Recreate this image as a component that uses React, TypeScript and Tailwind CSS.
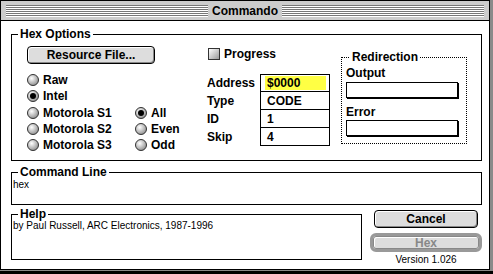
import React from 'react';

const Radio = ({ on }: { on?: boolean }) => (
  <svg width="12" height="12" viewBox="0 0 12 12" className="shrink-0">
    <defs>
      <radialGradient id="radioFill" cx="38%" cy="35%" r="70%">
        <stop offset="0" stopColor="#ffffff" />
        <stop offset="1" stopColor="#8c8c8c" />
      </radialGradient>
    </defs>
    <circle cx="6" cy="6" r="5.5" fill="url(#radioFill)" stroke="#333333" strokeWidth="1" />
    {on && <circle cx="6" cy="6" r="3" fill="#000000" />}
  </svg>
);

const RadioItem = ({ label, on }: { label: string; on?: boolean }) => (
  <div className="h-[16.25px] flex items-center gap-[4px] font-bold text-[12px] leading-[14px]">
    <Radio on={on} />
    <span>{label}</span>
  </div>
);

const Group = ({
  title,
  className,
  tight,
  children,
}: {
  title: string;
  className?: string;
  tight?: boolean;
  children?: React.ReactNode;
}) => (
  <fieldset className={`border border-black min-w-0 ${className ?? ''}`}>
    <legend
      className={`ml-[6px] px-[2px] font-bold text-[12px] ${tight ? 'leading-[10px]' : 'leading-[14px]'}`}
    >
      {title}
    </legend>
    {children}
  </fieldset>
);

const EditField = () => (
  <div className="w-[112px] h-[16px] border border-black bg-white shadow-[1px_1px_0_#000]" />
);

export default function App() {
  return (
    <div className="w-[493px] h-[274px] bg-black overflow-hidden font-['Liberation_Sans',Arial,sans-serif] text-black">
      <div className="w-[493px] h-[271px] bg-[#8a8a8a]">
        <div className="w-[490px] h-[270px] border border-black bg-white flex flex-col">
          {/* title bar */}
          <div className="h-[20px] shrink-0 bg-[#cccccc] border-b border-black flex items-center px-[5px]">
            <div className="flex-1 h-[12px] bg-[repeating-linear-gradient(to_bottom,#777777_0px,#777777_1px,#ffffff_1px,#ffffff_2px)]" />
            <div className="px-[4px] font-bold text-[12px] leading-[14px]">Commando</div>
            <div className="flex-1 h-[12px] bg-[repeating-linear-gradient(to_bottom,#777777_0px,#777777_1px,#ffffff_1px,#ffffff_2px)]" />
          </div>

          <div className="flex flex-col pl-[10px] pr-[7px] pt-[6px]">
            {/* Hex Options */}
            <Group title="Hex Options">
              <div className="flex">
                <div className="w-[195px] pl-[15px] pt-[5px] pb-[7px]">
                  <div className="w-[128px] h-[18px] rounded-[4px] border border-black bg-[#dddddd] shadow-[inset_1px_1px_0_#ffffff,inset_-1px_-1px_0_#888888] flex items-center justify-center font-bold text-[12px] leading-[14px]">
                    Resource File...
                  </div>
                  <div className="mt-[8px] grid grid-cols-[108px_1fr]">
                    <RadioItem label="Raw" />
                    <div />
                    <RadioItem label="Intel" on />
                    <div />
                    <RadioItem label="Motorola S1" />
                    <RadioItem label="All" on />
                    <RadioItem label="Motorola S2" />
                    <RadioItem label="Even" />
                    <RadioItem label="Motorola S3" />
                    <RadioItem label="Odd" />
                  </div>
                </div>

                <div className="w-[123px] pt-[5px]">
                  <div className="h-[16px] flex items-center gap-[4px] font-bold text-[12px] leading-[14px]">
                    <div className="ml-[1px] w-[12px] h-[12px] border border-[#333333] bg-[linear-gradient(135deg,#ffffff,#999999)]" />
                    <span>Progress</span>
                  </div>
                  <div className="mt-[12px] grid grid-cols-[53px_70px] font-bold text-[12px] leading-[14px]">
                    <div className="h-[18px] flex items-center">Address</div>
                    <div className="h-[18px] border border-black pl-[4px] pr-[3px] py-[1px]">
                      <div className="h-full bg-[#ffff44] pl-[2px] flex items-center">$0000</div>
                    </div>
                    <div className="h-[18px] flex items-center">Type</div>
                    <div className="h-[18px] border-x border-b border-black pl-[6px] flex items-center">CODE</div>
                    <div className="h-[18px] flex items-center">ID</div>
                    <div className="h-[18px] border-x border-b border-black pl-[6px] flex items-center">1</div>
                    <div className="h-[18px] flex items-center">Skip</div>
                    <div className="h-[18px] border-x border-b border-black pl-[6px] flex items-center">4</div>
                  </div>
                </div>

                <div className="ml-[11px] w-[126px] pt-[9px]">
                  <fieldset className="border border-dotted border-black pl-[4px] pb-[7px] min-w-0">
                    <legend className="ml-[4px] px-[2px] font-bold text-[12px] leading-[14px]">Redirection</legend>
                    <div className="mt-[2px] font-bold text-[12px] leading-[14px]">Output</div>
                    <div className="mt-[2px]">
                      <EditField />
                    </div>
                    <div className="mt-[7px] font-bold text-[12px] leading-[14px]">Error</div>
                    <div className="mt-[1px]">
                      <EditField />
                    </div>
                  </fieldset>
                </div>
              </div>
            </Group>

            {/* Command Line */}
            <Group title="Command Line" className="mt-[4px] h-[40px]">
              <div className="pl-[1px] text-[10px] leading-[12px]">hex</div>
            </Group>

            {/* Help + buttons */}
            <div className="mt-[2px] flex gap-[8px]">
              <Group title="Help" tight className="mt-[2px] w-[351px] h-[51px]">
                <div className="pt-[2px] pl-[1px] text-[10px] leading-[10px]">
                  by Paul Russell, ARC Electronics, 1987-1996
                </div>
              </Group>
              <div className="w-[112px] flex flex-col">
                <div className="mt-[3px] mx-[4px] h-[18px] rounded-[4px] border border-black bg-[#dddddd] shadow-[inset_1px_1px_0_#ffffff,inset_-1px_-1px_0_#888888] flex items-center justify-center font-bold text-[12px] leading-[14px]">
                  Cancel
                </div>
                <div className="mt-[5px] h-[19px] rounded-[6px] border-[3px] border-[#999999] bg-[#dddddd] flex">
                  <div className="flex-1 rounded-[3px] border border-[#888888] shadow-[inset_1px_1px_0_#ffffff] flex items-center justify-center font-bold text-[12px] leading-[12px] text-[#888888]">
                    Hex
                  </div>
                </div>
                <div className="mt-[2px] text-center text-[10px] leading-[12px]">Version 1.026</div>
              </div>
            </div>
          </div>
        </div>
      </div>
    </div>
  );
}
